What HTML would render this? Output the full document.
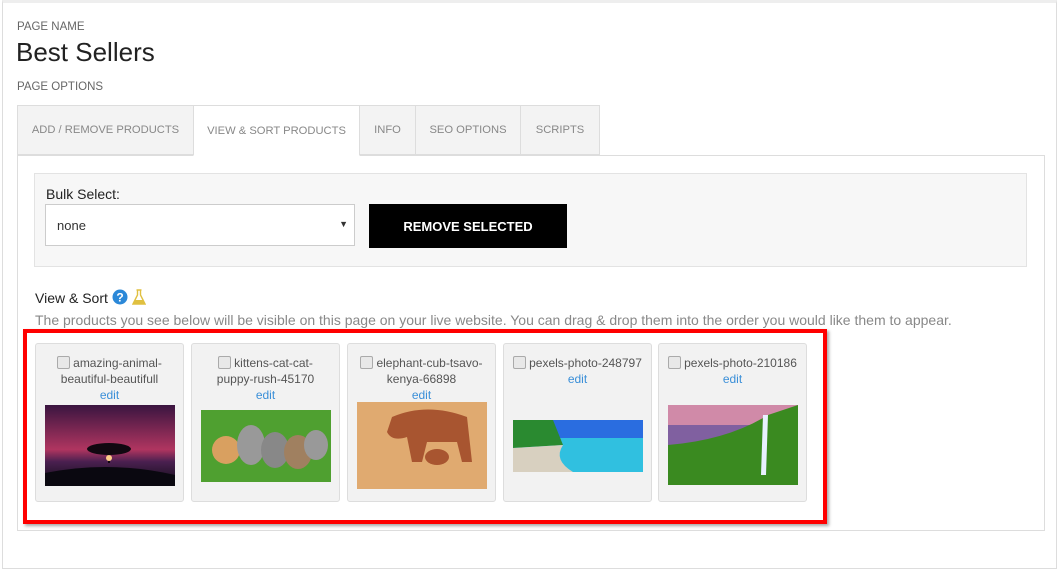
<!DOCTYPE html>
<html><head><meta charset="utf-8"><style>
*{box-sizing:border-box;margin:0;padding:0}
body{width:1059px;height:570px;background:#fff;font-family:"Liberation Sans",Arial,sans-serif;position:relative;overflow:hidden;color:#333}
.abs{position:absolute}
.frame{left:2px;top:0;width:1055px;height:569px;border:1px solid #ddd;border-top:3px solid #eee}
.lbl{font-size:11.5px;color:#666}
.tab{top:105px;height:50px;border:1px solid #ddd;background:#f3f3f3;font-size:11.2px;color:#888;display:flex;align-items:center;justify-content:center}
.panel{left:17px;top:155px;width:1028px;height:376px;border:1px solid #ddd}
.bulk{left:34px;top:173px;width:993px;height:94px;background:#f7f7f7;border:1px solid #e3e3e3}
.card{top:343px;width:149px;height:159px;background:#f2f2f2;border:1px solid #ddd;border-radius:3px;text-align:center;font-size:12px;color:#555;line-height:16px;padding-top:11px}
.cb{display:inline-block;width:13px;height:13px;border:1px solid #aaa;border-radius:2px;background:#e8e8e8;vertical-align:-2px;margin-right:3px}
.edit{color:#3a8fd8}
.img{position:absolute;left:9px;width:130px}
</style></head><body>
<div class="abs frame"></div>
<div class="abs lbl" style="left:17px;top:21px">PAGE NAME</div>
<div class="abs" style="left:16px;top:37px;font-size:26px;color:#222">Best Sellers</div>
<div class="abs lbl" style="left:17px;top:81px">PAGE OPTIONS</div>
<div class="abs panel"></div>
<div class="abs tab" style="left:17px;width:177px">ADD / REMOVE PRODUCTS</div>
<div class="abs tab" style="left:193px;width:167px;background:#fff;border-bottom:1px solid #fff;height:51px">VIEW &amp; SORT PRODUCTS</div>
<div class="abs tab" style="left:359px;width:57px">INFO</div>
<div class="abs tab" style="left:415px;width:106px">SEO OPTIONS</div>
<div class="abs tab" style="left:520px;width:80px">SCRIPTS</div>
<div class="abs bulk"></div>
<div class="abs" style="left:46px;top:186px;font-size:14px;color:#222">Bulk Select:</div>
<div class="abs" style="left:45px;top:204px;width:310px;height:42px;border:1px solid #ccc;background:#fff;font-size:13px;color:#333;padding:13px 0 0 11px">none<span style="position:absolute;right:6px;top:14px;font-size:9px">▼</span></div>
<div class="abs" style="left:369px;top:204px;width:198px;height:44px;background:#000;color:#fff;font-size:13px;font-weight:bold;display:flex;align-items:center;justify-content:center">REMOVE SELECTED</div>
<div class="abs" style="left:35px;top:289px;font-size:14px;color:#222">View &amp; Sort
<svg width="16" height="16" viewBox="0 0 16 16" style="vertical-align:-2px"><circle cx="8" cy="8" r="7.5" fill="#2b88d8"/><text x="8" y="12.5" font-size="12" font-weight="bold" fill="#fff" text-anchor="middle" font-family="Liberation Sans">?</text></svg>
<svg width="14" height="16" viewBox="0 0 14 16" style="vertical-align:-2px"><path d="M4.5 1h5M5.5 1v5L1 15h12L8.5 6V1" fill="none" stroke="#e0c040" stroke-width="1.4"/><path d="M3 11h8l2 4H1z" fill="#e0c040"/></svg></div>
<div class="abs" style="left:35px;top:312px;font-size:14px;color:#888">The products you see below will be visible on this page on your live website. You can drag &amp; drop them into the order you would like them to appear.</div>
<div class="abs" style="left:23px;top:329px;width:804px;height:195px;border:4px solid #f00;box-shadow:2px 2px 3px rgba(0,0,0,.35)"></div>
<div class="abs card" style="left:35px"><span class="cb"></span>amazing-animal-<br>beautiful-beautifull<br><span class="edit">edit</span>
<svg class="img" style="top:61px" width="130" height="81" viewBox="0 0 130 81"><defs><linearGradient id="a" x1="0" y1="0" x2="0" y2="1"><stop offset="0" stop-color="#3a1540"/><stop offset=".55" stop-color="#b03560"/><stop offset=".7" stop-color="#4a2050"/><stop offset="1" stop-color="#0e0c14"/></linearGradient></defs><rect width="130" height="81" fill="url(#a)"/><path d="M0 68Q65 55 130 70V81H0z" fill="#0a0810"/><ellipse cx="64" cy="44" rx="22" ry="6" fill="#100810"/><rect x="63" y="44" width="2" height="14" fill="#100810"/><circle cx="64" cy="53" r="3" fill="#ffcc88"/></svg></div>
<div class="abs card" style="left:191px"><span class="cb"></span>kittens-cat-cat-<br>puppy-rush-45170<br><span class="edit">edit</span>
<svg class="img" style="top:66px" width="130" height="72" viewBox="0 0 130 72"><rect width="130" height="72" fill="#4fa030"/><ellipse cx="25" cy="40" rx="14" ry="14" fill="#d9a060"/><ellipse cx="50" cy="35" rx="14" ry="20" fill="#999"/><ellipse cx="74" cy="40" rx="14" ry="18" fill="#888"/><ellipse cx="97" cy="42" rx="14" ry="17" fill="#a08060"/><ellipse cx="115" cy="35" rx="12" ry="15" fill="#999"/></svg></div>
<div class="abs card" style="left:347px"><span class="cb"></span>elephant-cub-tsavo-<br>kenya-66898<br><span class="edit">edit</span>
<svg class="img" style="top:58px" width="130" height="87" viewBox="0 0 130 87"><rect width="130" height="87" fill="#e0aa70"/><path d="M35 15Q70 0 110 15L115 60 105 60 100 40 70 40 65 60 55 60 50 35Q35 40 30 30z" fill="#a85530"/><ellipse cx="80" cy="55" rx="12" ry="8" fill="#a85530"/></svg></div>
<div class="abs card" style="left:503px"><span class="cb"></span>pexels-photo-248797<br><span class="edit">edit</span>
<svg class="img" style="top:76px" width="130" height="52" viewBox="0 0 130 52"><rect width="130" height="52" fill="#2a6de0"/><rect y="18" width="130" height="34" fill="#30c0e0"/><path d="M0 0h40l10 25L0 28z" fill="#2a8a30"/><path d="M0 28L50 25Q40 40 60 52H0z" fill="#d8d0c0"/></svg></div>
<div class="abs card" style="left:658px"><span class="cb"></span>pexels-photo-210186<br><span class="edit">edit</span>
<svg class="img" style="top:61px" width="130" height="80" viewBox="0 0 130 80"><rect width="130" height="80" fill="#8060a0"/><rect width="130" height="20" fill="#d08aa8"/><path d="M0 40Q60 35 100 10L130 0V80H0z" fill="#3a8a20"/><path d="M95 10l5 0 -2 60 -5 0z" fill="#e8f0ff"/></svg></div>
</body></html>
